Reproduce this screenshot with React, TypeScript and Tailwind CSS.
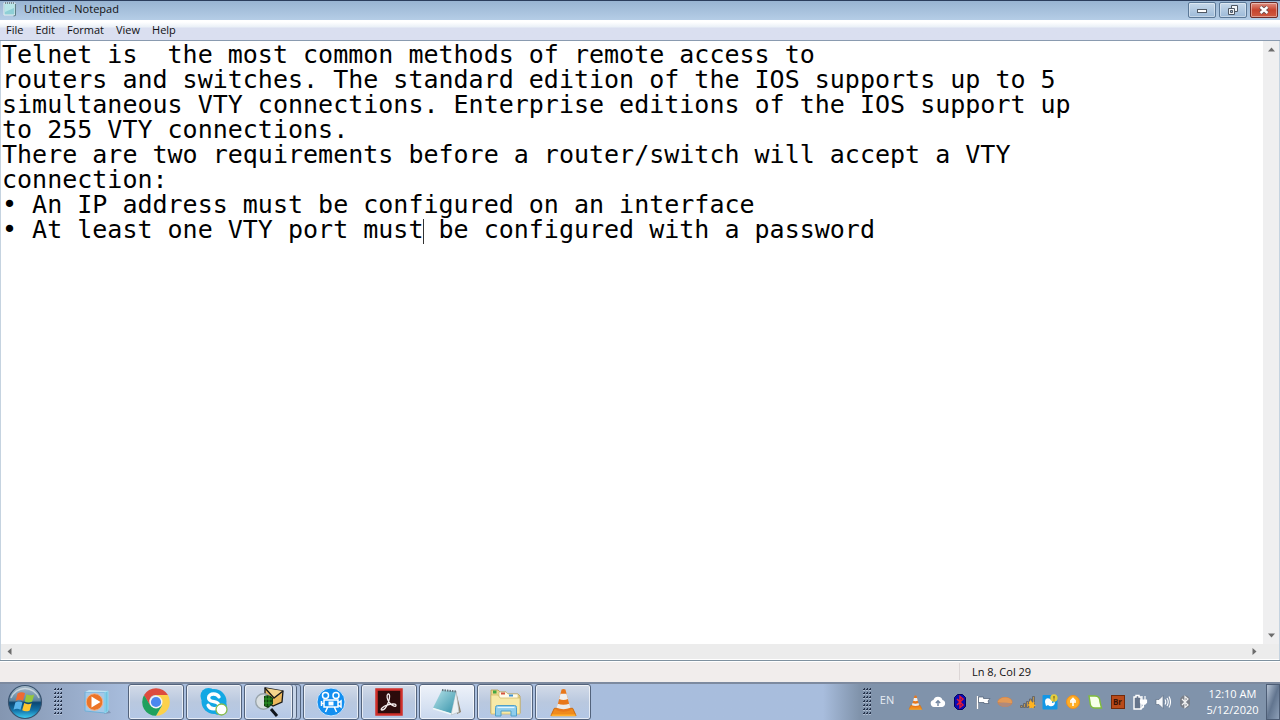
import React from "react";

const NOTE = `Telnet is  the most common methods of remote access to
routers and switches. The standard edition of the IOS supports up to 5
simultaneous VTY connections. Enterprise editions of the IOS support up
to 255 VTY connections.
There are two requirements before a router/switch will accept a VTY
connection:
• An IP address must be configured on an interface
• At least one VTY port must be configured with a password`;

function TitleIcon() {
  return (
    <svg width="14" height="16" viewBox="0 0 14 16" aria-hidden="true">
      <path d="M1 2h11v12H1z" fill="#8fcfd6" stroke="#e6eef0" strokeWidth="1" />
      <path d="M2 3h9v4L2 11z" fill="#b8e6e8" />
      <path d="M12.500 3v11.500l-2 .5" stroke="#5e7f86" fill="none" />
      <path d="M2.500 1v2M4.500 1v2M6.500 1v2M8.500 1v2M10.500 1v2" stroke="#7b8b93" strokeWidth="1" />
    </svg>
  );
}

function Grip() {
  return (
    <svg width="8" height="29" viewBox="0 0 8 29" aria-hidden="true" className="shrink-0">
      {[0, 4, 8, 12, 16, 20, 24].map((y) =>
        [0, 3, 6].map((x) => (
          <g key={`${x}-${y}`}>
            <rect x={x} y={y + 1} width="2" height="2" fill="#c9d6e8" opacity="0.6" />
            <path d={`M${x} ${y + 2}v-1h1v-1h1v2z`} fill="#27344c" />
          </g>
        )),
      )}
    </svg>
  );
}

function StartOrb() {
  return (
    <svg width="36" height="36" viewBox="0 0 36 36" aria-hidden="true">
      <defs>
        <linearGradient id="orb" x1="0" y1="0" x2="0" y2="1">
          <stop offset="0" stopColor="#a9bccb" />
          <stop offset="0.45" stopColor="#5f86a2" />
          <stop offset="0.52" stopColor="#0b4672" />
          <stop offset="0.75" stopColor="#1272a8" />
          <stop offset="1" stopColor="#3fd0f5" />
        </linearGradient>
      </defs>
      <circle cx="18" cy="18" r="16.500" fill="url(#orb)" stroke="#38526e" strokeWidth="1.200" />
      <path d="M4 14a15 15 0 0 1 28 0" fill="none" stroke="#fff" strokeOpacity="0.5" strokeWidth="1.500" />
      <path d="M10.500 9.500q4-2.500 7.500-.2l-2 7.500q-3.500-2-7.300 0z" fill="#ef6a32" />
      <path d="M19.500 10.200q3.500 2 7.700.2l-2 7.200q-4 2-7.500-.2z" fill="#95c83d" />
      <path d="M8.300 18.400q3.700-2 7.200.1l-2 7.300q-3.500-2-7 0z" fill="#58b4ec" />
      <path d="M17.200 19q3.500 2.200 7.500.2l-2 7.200q-4 2-7.500-.2z" fill="#fdc52f" />
    </svg>
  );
}

function PlayerIcon() {
  return (
    <svg width="28" height="28" viewBox="0 0 28 28" aria-hidden="true">
      <path d="M20 26l7-1-4-5z" fill="#6e86a3" opacity="0.6" />
      <path d="M1 4h20v21L1 23z" fill="#a3c9e8" stroke="#6fb0d8" />
      <path d="M21 4l3-1v20l-3 2z" fill="#72c2e0" stroke="#8fdaf0" />
      <path d="M1 4l4-2 19 1-3 1z" fill="#bfe2f2" />
      <circle cx="10.500" cy="14" r="8.300" fill="#ec7426" stroke="#f3b28a" />
      <path d="M7.500 8.500v11l9-5.500z" fill="#fff" />
    </svg>
  );
}

function ChromeIcon() {
  return (
    <svg width="28" height="28" viewBox="0 0 28 28" aria-hidden="true">
      <path d="M14 7.100h11.950A13.800 13.800 0 0 1 14 27.800L19.980 17.450z" fill="#fcd14b" />
      <path d="M2.050 7.100A13.800 13.800 0 0 0 14 27.800L19.980 17.450 8.020 17.450z" fill="#1fa15d" />
      <path d="M2.050 7.100A13.800 13.800 0 0 1 25.950 7.100H14a6.900 6.900 0 0 0-6.700 5.200L8 17.450z" fill="#dd4b3e" />
      <path d="M2.050 7.100L8.020 17.450 11 19 6 18z" fill="#1fa15d" />
      <circle cx="14" cy="14" r="6.500" fill="#f4f4f4" />
      <circle cx="14" cy="14" r="5.100" fill="#4a88ee" />
    </svg>
  );
}

function SkypeIcon() {
  return (
    <svg width="30" height="30" viewBox="0 0 30 30" aria-hidden="true">
      <circle cx="9.500" cy="9" r="8" fill="#13a8e4" />
      <circle cx="20" cy="20" r="8" fill="#13a8e4" />
      <circle cx="15" cy="14.500" r="12.500" fill="#13a8e4" />
      <path
        d="M20 9.800C18.800 7.800 16.800 7 14.600 7c-2.900 0-5 1.500-5 3.900 0 5 10.200 2.600 10.200 7.200 0 2.300-2.300 3.700-5 3.700-2.600 0-4.700-1.200-5.700-3.500"
        fill="none" stroke="#fff" strokeWidth="3.400" strokeLinecap="round"
      />
      <circle cx="22.500" cy="22.500" r="5.500" fill="#fff" stroke="#85bb4d" strokeWidth="1.300" />
    </svg>
  );
}

function MailSearchIcon() {
  return (
    <svg width="30" height="32" viewBox="0 0 30 32" aria-hidden="true">
      <path d="M11 2l18 3-1 11-9 4-8-5z" fill="#ecb85c" stroke="#191919" strokeWidth="1.300" />
      <path d="M11 2l9 10 9-7" fill="#f5d48b" stroke="#191919" strokeWidth="1.300" />
      <circle cx="9.500" cy="15.500" r="7.800" fill="#d9dfe1" stroke="#9aa5ac" strokeWidth="1.400" />
      <path d="M10 10q6-2 9 2v6l-5 4-4-2z" fill="#12420f" />
      <path d="M12 10v10M15 10v10M10 13h8M10 17h8" stroke="#2c9c29" strokeWidth="1" />
      <path d="M17 23l6 7" stroke="#10151c" strokeWidth="3" />
    </svg>
  );
}

function CameraIcon() {
  return (
    <svg width="30" height="30" viewBox="0 0 30 30" aria-hidden="true">
      <circle cx="15" cy="15" r="14" fill="#138ff0" stroke="#cde4fa" strokeWidth="1" />
      <g fill="none" stroke="#fff" strokeWidth="1.500">
        <circle cx="9.500" cy="8.500" r="3" />
        <circle cx="20" cy="8.500" r="3" />
        <path d="M8 13h14v7H8zM22 16l3-2v6l-3-2M11.500 20.500L9.500 25M18.500 20.500l2 4.500M5.500 14v5M5.500 16.500H8" />
      </g>
      <path d="M12.500 14.500h5v4h-5z" fill="#fff" />
    </svg>
  );
}

function AcrobatIcon() {
  return (
    <svg width="28" height="28" viewBox="0 0 28 28" aria-hidden="true">
      <rect x="1.500" y="1.500" width="25" height="25" fill="#2c0b0b" stroke="#cf2f2a" strokeWidth="2.500" />
      <path
        d="M13 6c2.500-.5 1.500 5 .5 8-1.500 4-4 8-6.500 8-2.500-.5 1-3.500 5-4.800 3.500-1.200 9-2 9 0 0 2.500-4.500.3-6.800-2.700C12 11.500 11.300 7 13 6z"
        fill="none" stroke="#f5eded" strokeWidth="1.300"
      />
    </svg>
  );
}

function NotepadIcon() {
  return (
    <svg width="30" height="30" viewBox="0 0 30 30" aria-hidden="true">
      <defs>
        <linearGradient id="pad" x1="0" y1="0" x2="1" y2="1">
          <stop offset="0" stopColor="#b7e3e9" />
          <stop offset="1" stopColor="#3593aa" />
        </linearGradient>
      </defs>
      <path d="M24 4l5 21-4 2z" fill="#8a7d66" />
      <path d="M24 4l3 21-8 3z" fill="#eef2f3" stroke="#b9c2c8" strokeWidth="0.700" />
      <path d="M10 3l14 1.500-5 22L1 21z" fill="url(#pad)" />
      <path d="M10 3l14 1.500" stroke="#62747c" strokeWidth="2" strokeDasharray="1.500 1" />
      <path d="M1 21.500l18 5.500" stroke="#eef7f8" strokeWidth="1.500" />
    </svg>
  );
}

function FolderIcon() {
  return (
    <svg width="32" height="30" viewBox="0 0 32 30" aria-hidden="true">
      <path d="M2 3h7l2 2h6l2 2h10l2 2v17H2z" fill="#ecd88d" stroke="#b99c4b" strokeWidth="0.800" />
      <path d="M10 5h7l2 2h10v5H10z" fill="#fffbe9" stroke="#c5b272" strokeWidth="0.600" />
      <path d="M4 3.500h3.500v3H4z" fill="#42a742" />
      <path d="M12 5.500h4v2h-4z" fill="#d5543f" />
      <path d="M20 7.500h4v2h-4z" fill="#3f92d3" />
      <path d="M2 8h7l2 3h20v16H2z" fill="#f7e9a8" stroke="#cfb866" strokeWidth="0.700" />
      <path d="M6.500 29V20.500q0-2 2-2h17q2 0 2 2V29h-5.500v-5H12v5z" fill="#8ecdec" stroke="#4e9fca" />
      <path d="M8.500 20.500h17" stroke="#e3f6ff" strokeWidth="1.200" />
    </svg>
  );
}

function ConeIcon({ size }: { size: number }) {
  return (
    <svg width={size} height={size} viewBox="0 0 30 30" aria-hidden="true">
      <path d="M5.500 21h19l3.500 7.500H2z" fill="#f08a1d" stroke="#c9690f" />
      <path d="M13 1.500q2-1 4 0L22.500 23q-7.500 3-15 0z" fill="#e8771a" />
      <path d="M11.900 6h6.200l1.500 5.500q-4.600 1.800-9.200 0z" fill="#efefef" />
      <path d="M9 16.200q6 2.300 12 0l1.200 4.300q-7.200 3-14.400 0z" fill="#ebebeb" />
      <path d="M2.500 28.300h25" stroke="#ffb02f" strokeWidth="1.800" />
    </svg>
  );
}

const trayIcons: { name: string; icon: React.ReactNode }[] = [
  { name: "VLC media player", icon: <ConeIcon size={15} /> },
  {
    name: "Cloud upload",
    icon: (
      <svg width="16" height="16" viewBox="0 0 16 16">
        <path d="M4 13a3.500 3.500 0 0 1-.6-6.900A4.800 4.800 0 0 1 12.500 6a3.600 3.600 0 0 1-.3 7z" fill="#fff" />
        <path d="M8 12V7M5.800 9L8 6.800 10.200 9" stroke="#7185a0" strokeWidth="1.400" fill="none" />
      </svg>
    ),
  },
  {
    name: "Bluetooth suite",
    icon: (
      <svg width="16" height="16" viewBox="0 0 16 16">
        <path d="M5.500.5h5l3 3v9l-3 3h-5l-3-3v-9z" fill="#0b0bb4" stroke="#050560" />
        <path d="M5 5l6 6-3 2.500v-11L11 5l-6 6" stroke="#e21b36" strokeWidth="1.500" fill="none" />
      </svg>
    ),
  },
  {
    name: "Action Center",
    icon: (
      <svg width="16" height="16" viewBox="0 0 16 16">
        <path d="M2.500 2v13" stroke="#4c5b72" strokeWidth="3" />
        <path d="M2.500 2v13" stroke="#fff" strokeWidth="1.800" />
        <path d="M3.500 3h5v1.500h6.500L13 7l1 2.500H9V8.500H3.500z" fill="#fff" stroke="#4c5b72" strokeWidth="0.700" />
      </svg>
    ),
  },
  {
    name: "Update agent",
    icon: (
      <svg width="16" height="16" viewBox="0 0 16 16">
        <ellipse cx="8" cy="8" rx="7.500" ry="5" fill="#d28345" />
        <path d="M.5 8Q3 3 9 3.500T15 9Q8 10 .5 8z" fill="#e29a58" />
        <path d="M1 9q6-1 13.500.500Q12 13 8 13T1 9z" fill="#b08a7c" />
      </svg>
    ),
  },
  {
    name: "Network",
    icon: (
      <svg width="16" height="16" viewBox="0 0 16 16">
        <path d="M.5 11.500h2v2h-2zM3.500 9.500h2v4h-2zM6.500 7.500h2v6h-2zM9.500 5h2v8.500h-2zM12.500 2.500h2v11h-2z" fill="#bd9650" stroke="#5a5e68" strokeWidth="0.800" />
        <path d="M11 6.500l1.200 2 2.300-.5-.5 2.300 2 1.200-2 1-.5 2-2-.8-2.200.8V12l-2-1 2-1-.5-2z" fill="#ffb321" />
      </svg>
    ),
  },
  {
    name: "Sync client",
    icon: (
      <svg width="16" height="16" viewBox="0 0 16 16">
        <rect x="0.500" y="1" width="15" height="14.500" rx="1" fill="#1397e6" />
        <path d="M3 8c0-5 5-4 6-2l1-1v4l3-1c0 5-5 5-7 3L4 12z" fill="#fff" />
        <circle cx="12" cy="4" r="3.700" fill="#e6cd3e" />
        <path d="M12 2v2.700M12 5.500v1" stroke="#665211" />
      </svg>
    ),
  },
  {
    name: "Avast",
    icon: (
      <svg width="16" height="16" viewBox="0 0 16 16">
        <circle cx="8" cy="8" r="6.500" fill="#ffad25" stroke="#f08f1c" />
        <path d="M8 4v8M5 8h6M5.500 7L8 4.500 10.500 7" fill="none" stroke="#fff" strokeWidth="1.600" />
      </svg>
    ),
  },
  {
    name: "Leaf",
    icon: (
      <svg width="16" height="16" viewBox="0 0 16 16">
        <path d="M2 2h6c4 0 5 3 5 6l1.500 6H8c-4 0-5-3-5-6z" fill="#f7ffe9" stroke="#80bd3b" strokeWidth="1.400" />
      </svg>
    ),
  },
  {
    name: "Adobe Bridge",
    icon: (
      <span className="flex h-[14px] w-[14px] items-center justify-center border border-[#742a0a] bg-[#b94a1a] text-[8px] font-bold leading-none text-[#3b1205]">
        Br
      </span>
    ),
  },
  {
    name: "Power",
    icon: (
      <svg width="16" height="16" viewBox="0 0 16 16">
        <path d="M2 3h2V1.500h3V3h2v12H2z" fill="#65748b" stroke="#fff" strokeWidth="1.400" />
        <path d="M10 2v4M13 2v4M8.500 6h6v2.500q-1 2-3 2T8.500 8.500zM11.500 10v3l-3 2" fill="#fff" stroke="#fff" strokeWidth="1.200" />
      </svg>
    ),
  },
  {
    name: "Volume",
    icon: (
      <svg width="16" height="16" viewBox="0 0 16 16">
        <path d="M1 5.500h3l4-4v13l-4-4H1z" fill="#f6f8fb" stroke="#56657b" strokeWidth="0.600" />
        <path d="M10 5.500q1.500 2.500 0 5M12 4q2.500 4 0 8M14 2.500q3 5.500 0 11" fill="none" stroke="#fff" strokeWidth="1.100" />
      </svg>
    ),
  },
  {
    name: "Bluetooth",
    icon: (
      <svg width="16" height="16" viewBox="0 0 16 16">
        <rect x="3" y="1.500" width="10" height="13" rx="5" fill="#7a7f88" />
        <path d="M5 5l6 6-3 2.500v-11L11 5l-6 6" stroke="#f1f1f1" strokeWidth="1.200" fill="none" />
      </svg>
    ),
  },
];

function TaskButton({ label, active, children }: { label: string; active?: boolean; children: React.ReactNode }) {
  const tone = active
    ? "from-[#eef2f9] to-[#c9d8ee]"
    : "from-[#d3dbe8] via-[#b9c8df] to-[#b3c7e6]";
  return (
    <button
      type="button"
      aria-label={label}
      className={`flex w-14 shrink-0 items-center justify-center rounded-[3px] border border-[#53637c] bg-linear-to-b shadow-[inset_0_0_0_1px_rgba(255,255,255,0.65)] ${tone}`}
    >
      {children}
    </button>
  );
}

const captionButton =
  "flex h-4 w-7 items-center justify-center rounded-[2px] border shadow-[inset_0_0_0_1px_rgba(255,255,255,0.4)] bg-linear-to-b";

export default function App() {
  return (
    <div className="flex h-screen flex-col overflow-hidden bg-white font-['Open_Sans','Noto_Sans',sans-serif] text-[11px] leading-4 text-[#111]">
      <header className="flex h-5 shrink-0 items-start border-t border-[#2b3d5c] bg-linear-to-b from-[#98b4d2] to-[#b5cde6] pl-[3px] pr-0.5">
        <TitleIcon />
        <h1 className="ml-[7px] flex-1">Untitled - Notepad</h1>
        <div className="flex gap-[3px] pt-px">
          <button type="button" aria-label="Minimize" className={`${captionButton} border-[#5b7897] from-[#c6d8ea] to-[#9dbad8]`}>
            <svg width="12" height="12" viewBox="0 0 12 12"><rect x="1.500" y="5.500" width="9" height="3" fill="#fff" stroke="#4f5864" /></svg>
          </button>
          <button type="button" aria-label="Restore" className={`${captionButton} border-[#5b7897] from-[#c6d8ea] to-[#9dbad8]`}>
            <svg width="12" height="12" viewBox="0 0 12 12">
              <path d="M4.500 1.500h6v6h-6z" fill="#f2f5f8" stroke="#4f5864" />
              <path d="M1.500 4.500h6v6h-6z" fill="#f2f5f8" stroke="#4f5864" />
              <path d="M3.500 6.500h2v2h-2z" fill="#91add0" stroke="#4f5864" />
            </svg>
          </button>
          <button type="button" aria-label="Close" className={`${captionButton} border-[#6e2a26] from-[#df8f82] via-[#c7432d] to-[#cf5a41]`}>
            <svg width="12" height="12" viewBox="0 0 12 12">
              <path d="M2.500 3l7 6M9.500 3l-7 6" stroke="#5d4a4e" strokeWidth="4" />
              <path d="M2.500 3l7 6M9.500 3l-7 6" stroke="#fff" strokeWidth="2.400" />
            </svg>
          </button>
        </div>
      </header>

      <nav aria-label="Menu bar" className="flex h-[21px] shrink-0 items-center gap-3 border-b border-[#8a9bb0] bg-linear-to-b from-white from-10% via-[#eaf0f7] via-35% to-[#dadff0] to-40% px-1.5">
        {["File", "Edit", "Format", "View", "Help"].map((item) => (
          <button key={item} type="button">{item}</button>
        ))}
      </nav>

      <main className="flex min-h-0 flex-1 flex-col border-x border-[#c5d3e0]">
        <div className="flex min-h-0 flex-1">
          <div className="relative flex min-w-0 flex-1">
            <textarea
              aria-label="Text editor"
              spellCheck={false}
              wrap="off"
              defaultValue={NOTE}
              className="min-w-0 flex-1 resize-none overflow-hidden whitespace-pre bg-white pl-px pt-px font-['DejaVu_Sans_Mono','Liberation_Mono',monospace] text-[25px] leading-[25px] text-black outline-none"
            />
            <span aria-hidden="true" className="absolute left-[422px] top-[178px] h-[25px] w-px bg-[#333]" />
          </div>
          <div aria-hidden="true" className="flex w-4 shrink-0 flex-col items-center justify-between bg-[#efeff0] py-1.5">
            <svg width="7" height="5" viewBox="0 0 7 5"><path d="M0 4.500L3.500.5 7 4.500z" fill="#6c6c6c" /></svg>
            <svg width="7" height="5" viewBox="0 0 7 5"><path d="M0 .5L3.500 4.500 7 .5z" fill="#6c6c6c" /></svg>
          </div>
        </div>
        <div aria-hidden="true" className="flex h-4 shrink-0 items-center justify-between border-b border-white bg-[#ececec] pb-px pl-1.5 pr-[22px]">
          <svg width="5" height="7" viewBox="0 0 5 7"><path d="M4.500 0L.5 3.500 4.500 7z" fill="#6c6c6c" /></svg>
          <svg width="5" height="7" viewBox="0 0 5 7"><path d="M.5 0L4.500 3.500.5 7z" fill="#6c6c6c" /></svg>
        </div>
      </main>

      <div role="status" className="flex h-[22px] shrink-0 border-t border-[#7f919f] bg-[#f1edec] shadow-[inset_0_1px_0_#fff]">
        <div className="flex-1" />
        <div className="my-0.5 flex w-[321px] items-center border-l border-[#dcd6d6] pl-3 pt-px">Ln 8, Col 29</div>
      </div>

      <footer className="flex h-[38px] shrink-0 border-t-2 border-[#7d8a9f] bg-linear-to-r from-[#8496b1] from-0% via-[#a8bddd] via-10% to-[#a8bddd]">
        <button type="button" aria-label="Start" className="ml-[7px] flex shrink-0 items-center">
          <StartOrb />
        </button>
        <div className="ml-[11px] flex items-center"><Grip /></div>
        <button type="button" aria-label="Windows Media Player" className="ml-[22px] flex w-7 items-center"><PlayerIcon /></button>
        <div className="ml-4 flex gap-0.5">
          <TaskButton label="Chrome"><ChromeIcon /></TaskButton>
          <TaskButton label="Skype"><SkypeIcon /></TaskButton>
          <div className="flex w-[57px] rounded-[3px] border border-[#53637c] bg-[#a9bcd9]">
            <button type="button" aria-label="Mail search" className="flex w-12 items-center justify-center rounded-[3px] border-r border-[#53637c] bg-linear-to-b from-[#d3dbe8] to-[#b3c7e6] shadow-[inset_0_0_0_1px_rgba(255,255,255,0.65)]">
              <MailSearchIcon />
            </button>
            <div className="w-1 rounded-r-[3px] border-r border-[#53637c] bg-[#c6d4e8]" />
          </div>
          <TaskButton label="Screen recorder"><CameraIcon /></TaskButton>
          <TaskButton label="Acrobat Reader"><AcrobatIcon /></TaskButton>
          <TaskButton label="Notepad" active><NotepadIcon /></TaskButton>
          <TaskButton label="File Explorer"><FolderIcon /></TaskButton>
          <TaskButton label="VLC media player"><ConeIcon size={29} /></TaskButton>
        </div>
        <div className="ml-auto flex items-center bg-linear-to-r from-[#a8bddd] from-0% to-[#8093ab] to-8% pl-10 text-white">
          <Grip />
          <button type="button" className="ml-2 mb-1 w-4 text-[11px] text-[#e6ebf2]">EN</button>
          <div className="ml-3 flex w-[286px] justify-between">
            {trayIcons.map((t) => (
              <button key={t.name} type="button" aria-label={t.name} className="flex h-4 w-4 items-center justify-center">{t.icon}</button>
            ))}
          </div>
          <button type="button" className="flex w-[73px] flex-col items-center pl-1.5 text-[11px] leading-4">
            <time>12:10 AM</time>
            <time>5/12/2020</time>
          </button>
          <button type="button" aria-label="Show desktop" className="h-full w-3.5 border border-[#4d5d75] bg-linear-to-br from-[#b6c3d4] via-[#62758f] to-[#8ea0b8]" />
        </div>
      </footer>
    </div>
  );
}
